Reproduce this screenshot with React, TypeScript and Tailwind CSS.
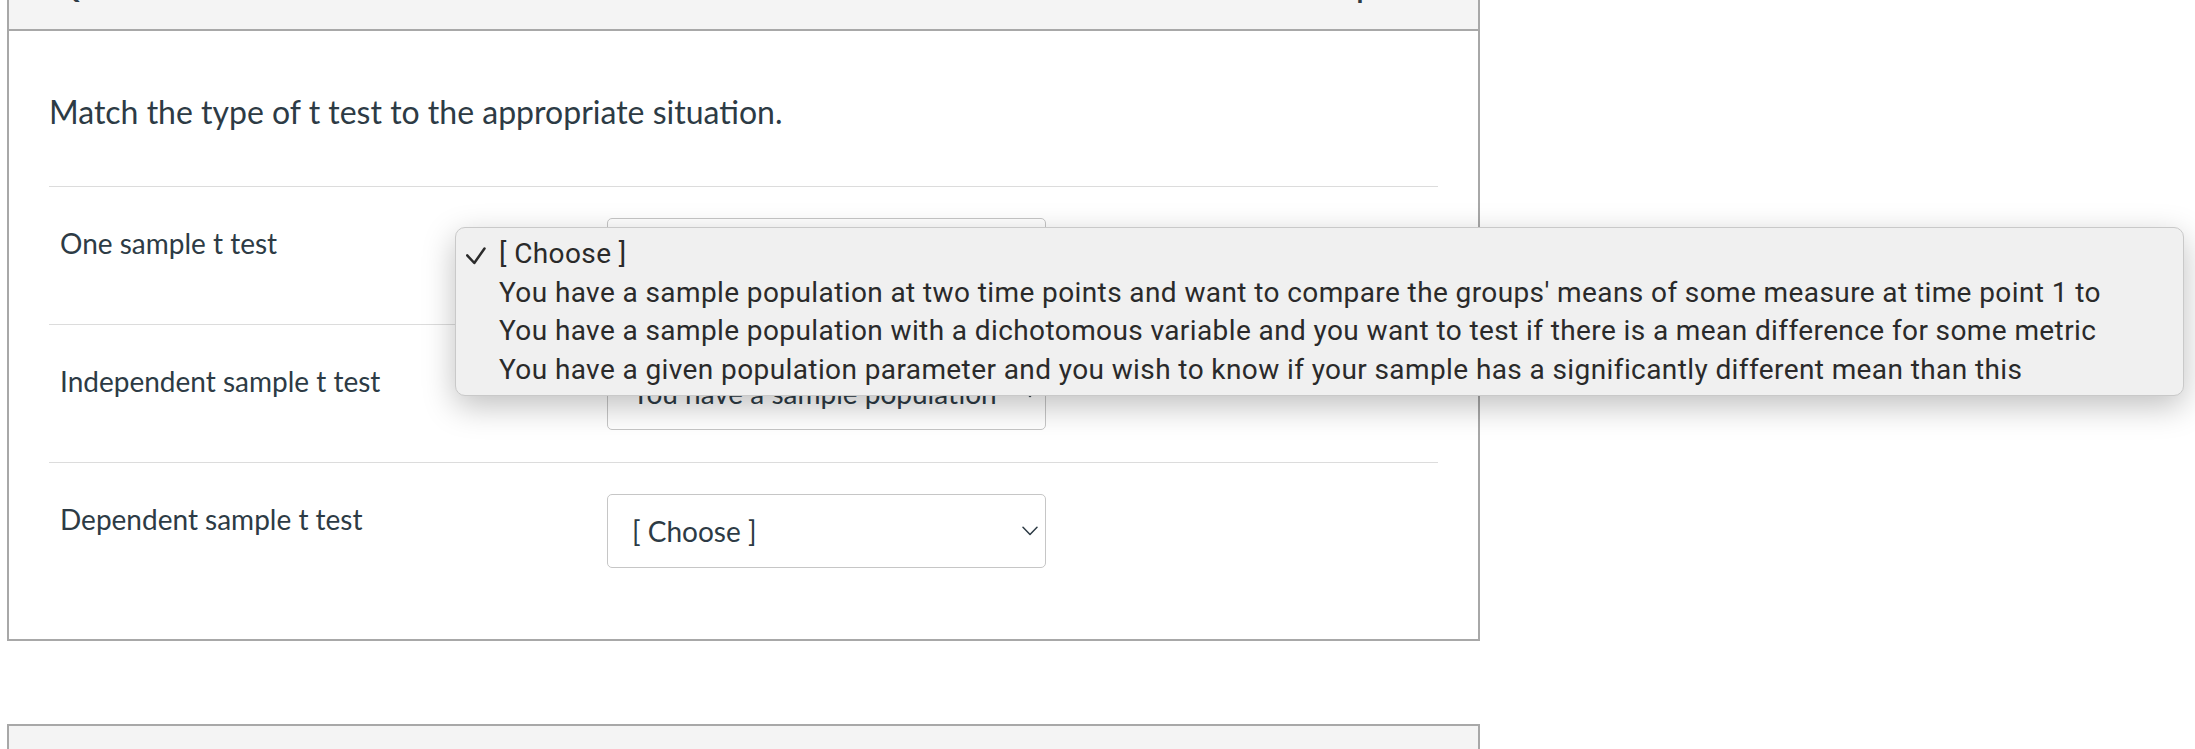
import React from "react";

const LATO = { fontFamily: "Lato, 'Noto Sans', sans-serif" } as React.CSSProperties;

function Chevron() {
  return (
    <svg width="16" height="10" viewBox="0 0 16 10" className="shrink-0">
      <path d="M1 1.2 L8 8.5 L15 1.2" fill="none" stroke="#2d3b45" strokeWidth="1.5" strokeLinecap="round" strokeLinejoin="round" />
    </svg>
  );
}

function SelectBox({ value }: { value: string }) {
  return (
    <div className="w-[439px] h-[74px] shrink-0 border-[1.5px] border-[#c6c6c6] rounded-[5px] bg-white flex items-center pl-[24px] pr-[7px]">
      <div className="flex-1 overflow-hidden whitespace-nowrap text-[28px] leading-[1.2] text-[#2d3b45]">{value}</div>
      <div className="ml-[21px]">
        <Chevron />
      </div>
    </div>
  );
}

function Row({ label, value }: { label: string; value: string }) {
  return (
    <div className="border-t-[1.5px] border-[#dcdcdc] pt-[31px] pb-[32px] flex items-start">
      <div className="w-[558px] shrink-0 pl-[11px] pt-[9px] text-[28px] leading-[1.2] text-[#2d3b45]">{label}</div>
      <SelectBox value={value} />
    </div>
  );
}

const OPTIONS = [
  "[ Choose ]",
  "You have a sample population at two time points and want to compare the groups' means of some measure at time point 1 to",
  "You have a sample population with a dichotomous variable and you want to test if there is a mean difference for some metric",
  "You have a given population parameter and you wish to know if your sample has a significantly different mean than this",
];

function Dropdown() {
  return (
    <div
      className="absolute top-[227px] left-[455px] w-[1729px] h-[169px] rounded-[10px] border border-[#c9c9c9] bg-[#f0f0f0] shadow-[0_10px_32px_rgba(0,0,0,0.25)] pt-[7px] pl-[10px]"
      style={{ fontFamily: "Roboto, 'Liberation Sans', sans-serif" }}
    >
      {OPTIONS.map((o, i) => (
        <div key={i} className="flex items-start h-[38.5px]">
          <div className="w-[33px] shrink-0 pt-[12px]">
            {i === 0 && (
              <svg width="20" height="18" viewBox="0 0 20 18">
                <path d="M1.2 8.3 L8.3 16 L18.5 1.5" fill="none" stroke="#2b2b2b" strokeWidth="2.5" strokeLinecap="round" strokeLinejoin="round" />
              </svg>
            )}
          </div>
          <div className="text-[28px] leading-[38.5px] tracking-[0.4px] text-[#2a2a2a] whitespace-nowrap">{o}</div>
        </div>
      ))}
    </div>
  );
}

export default function App() {
  return (
    <div className="relative flow-root min-h-screen overflow-hidden bg-white" style={LATO}>
      <div className="-mt-[40px] pl-[7px]">
        <div className="w-[1473px] border-2 border-[#a8a8a8]">
          <div className="h-[69px] bg-[#f4f4f4] border-b-2 border-[#a8a8a8] overflow-hidden flex justify-between pl-[48px] pr-[83px] pt-[9px] text-[28px] font-bold leading-[1.2] text-[#2d3b45]">
            <span>Question 1</span>
            <span>1 pts</span>
          </div>
          <div className="px-[40px] pt-[62px] pb-[39px]">
            <div className="text-[32px] leading-[1.2] text-[#2d3b45] mb-[55px]">
              Match the type of t test to the appropriate situation.
            </div>
            <Row label="One sample t test" value="[ Choose ]" />
            <Row
              label="Independent sample t test"
              value="You have a sample population with a dichotomous variable and you want to test if there is a mean difference for some metric"
            />
            <Row label="Dependent sample t test" value="[ Choose ]" />
          </div>
        </div>
        <div className="mt-[83px] w-[1473px] border-2 border-[#a8a8a8]">
          <div className="h-[120px] bg-[#f4f4f4]" />
        </div>
      </div>
      <Dropdown />
    </div>
  );
}
